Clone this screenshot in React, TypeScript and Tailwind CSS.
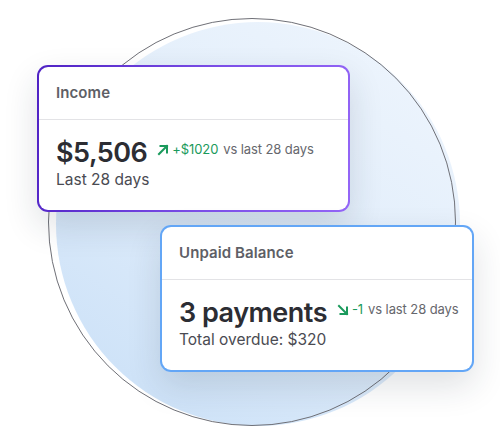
import React from "react";

function ArrowUpRight() {
  return (
    <svg width="12" height="12" viewBox="0 0 12 12" fill="none" stroke="#1a9a5c" strokeWidth="2" strokeLinecap="square">
      <path d="M2 10 L10 2" />
      <path d="M3.5 2 H10 V8.5" />
    </svg>
  );
}

function ArrowDownRight() {
  return (
    <svg width="12" height="12" viewBox="0 0 12 12" fill="none" stroke="#1a9a5c" strokeWidth="2" strokeLinecap="square">
      <path d="M2 2 L10 10" />
      <path d="M10 3.5 V10 H3.5" />
    </svg>
  );
}

type StatProps = {
  title: string;
  value: string;
  delta: string;
  up: boolean;
  sub: string;
  frame: string;
  width: string;
  offset: string;
};

function StatCard({ title, value, delta, up, sub, frame, width, offset }: StatProps) {
  return (
    <div
      className={`relative ${offset} ${width} rounded-[11px] border-2 border-transparent shadow-[0_14px_34px_rgba(30,41,59,0.14)] ${frame}`}
    >
      <div className="h-[53px] flex items-center px-[17px] border-b border-[#e3e3e6]">
        <span className="text-[15px] font-semibold text-[#5e5f66] tracking-[0.1px]">{title}</span>
      </div>
      <div className="px-[17px] pt-[17px] pb-[20px]">
        <div className="flex items-center gap-[10px] whitespace-nowrap">
          <span className="text-[27px] leading-[32px] font-semibold text-[#2c2d33] tracking-[-0.5px]">{value}</span>
          <span className="flex items-center gap-[3px] text-[13px] mt-[-6px] tracking-[-0.1px]">
            {up ? <ArrowUpRight /> : <ArrowDownRight />}
            <span className="text-[#1a9a5c]">{delta}</span>
            <span className="text-[#66676d] ml-[2px]">vs last 28 days</span>
          </span>
        </div>
        <div className="text-[15.5px] leading-[20px] text-[#4a4b52] mt-[1px] whitespace-nowrap">{sub}</div>
      </div>
    </div>
  );
}

export default function App() {
  return (
    <div
      className="relative w-[500px] h-[438px] bg-white overflow-hidden"
      style={{ fontFamily: "Inter, 'Noto Sans', sans-serif" }}
    >
      {/* backdrop disc with its outline ring */}
      <div className="absolute left-[56px] top-[22px] w-[404px] h-[404px] rounded-full bg-[linear-gradient(215deg,#f0f6fd_0%,#e2eefb_45%,#c8dff7_100%)]" />
      <div className="absolute left-[48px] top-[18px] w-[408px] h-[408px] rounded-full border-[1.5px] border-[#6f7077]" />

      <div className="relative flex flex-col pt-[65px]">
        <StatCard
          title="Income"
          value="$5,506"
          delta="+$1020"
          up
          sub="Last 28 days"
          width="w-[313px]"
          offset="ml-[37px]"
          frame="[background:linear-gradient(#fff,#fff)_padding-box,linear-gradient(100deg,#4f22c4,#7c4fe8_55%,#9466f7)_border-box]"
        />
        <StatCard
          title="Unpaid Balance"
          value="3 payments"
          delta="-1"
          up={false}
          sub="Total overdue: $320"
          width="w-[314px]"
          offset="ml-[160px] mt-[13px]"
          frame="[background:linear-gradient(#fff,#fff)_padding-box,linear-gradient(#63a6f6,#63a6f6)_border-box]"
        />
      </div>
    </div>
  );
}
